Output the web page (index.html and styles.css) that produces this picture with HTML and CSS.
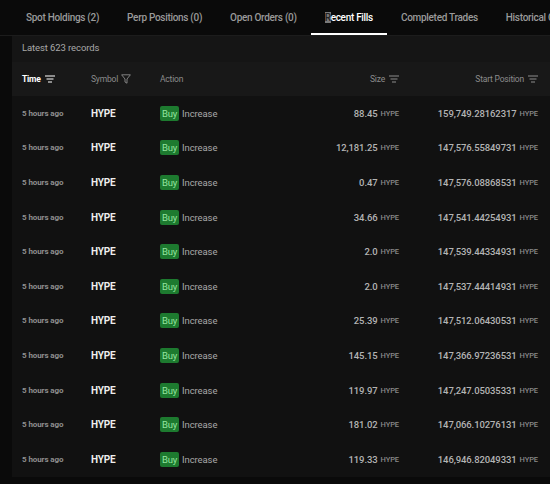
FILE: index.html
```html
<!DOCTYPE html>
<html lang="en">
<head>
    <meta charset="UTF-8">
    <title>Recent Fills</title>
    <link rel="stylesheet" href="styles.css">
</head>
<body>
    <nav class="tabs">
        <div class="tab">Spot Holdings (2)</div>
        <div class="tab">Perp Positions (0)</div>
        <div class="tab">Open Orders (0)</div>
        <div class="tab active"><span class="sel">R</span>ecent Fills</div>
        <div class="tab">Completed Trades</div>
        <div class="tab">Historical Orders</div>
    </nav>
    <div class="panel">
        <div class="count">Latest 623 records</div>
        <div class="row head">
            <div class="cell strong">Time <svg class="ico" viewBox="0 0 10 8"><path d="M0 1h10M1.5 4h7M3 7h4" stroke="currentColor" stroke-width="1.2"/></svg></div>
            <div class="cell">Symbol <svg class="ico funnel" viewBox="0 0 10 10"><path d="M0.6 0.8h8.8L6 5v4.2L4 8V5z" fill="none" stroke="currentColor" stroke-width="0.9"/></svg></div>
            <div class="cell">Action</div>
            <div class="cell num">Size <svg class="ico" viewBox="0 0 10 8"><path d="M0 1h10M1.5 4h7M3 7h4" stroke="currentColor" stroke-width="1"/></svg></div>
            <div class="cell num">Start Position <svg class="ico" viewBox="0 0 10 8"><path d="M0 1h10M1.5 4h7M3 7h4" stroke="currentColor" stroke-width="1"/></svg></div>
        </div>
        <div id="rows"></div>
    </div>

    <script>
        const fills = [
            ['88.45', '159,749.28162317'],
            ['12,181.25', '147,576.55849731'],
            ['0.47', '147,576.08868531'],
            ['34.66', '147,541.44254931'],
            ['2.0', '147,539.44334931'],
            ['2.0', '147,537.44414931'],
            ['25.39', '147,512.06430531'],
            ['145.15', '147,366.97236531'],
            ['119.97', '147,247.05035331'],
            ['181.02', '147,066.10276131'],
            ['119.33', '146,946.82049331']
        ];
        const rows = document.getElementById('rows');
        fills.forEach(f => {
            const row = document.createElement('div');
            row.className = 'row';
            row.innerHTML =
                '<div class="cell time">5 hours ago</div>' +
                '<div class="cell sym">HYPE</div>' +
                '<div class="cell"><span class="buy">Buy</span><span class="dir">Increase</span></div>' +
                '<div class="cell num val">' + f[0] + ' <span class="unit">HYPE</span></div>' +
                '<div class="cell num val">' + f[1] + ' <span class="unit">HYPE</span></div>';
            rows.appendChild(row);
        });
    </script>
</body>
</html>
```

FILE: styles.css
```css
body {
    margin: 0;
    background-color: #0a0a0a;
    font-family: Roboto, "Liberation Sans", sans-serif;
    color: #9a9a9a;
    overflow: hidden;
}
.tabs {
    display: flex;
    height: 35px;
    padding-left: 12px;
    border-bottom: 1px solid #1c1c1c;
    white-space: nowrap;
    overflow: hidden;
}
.tab {
    padding: 0 14px;
    line-height: 35px;
    font-size: 10px;
    letter-spacing: -0.3px;
    font-weight: 500;
    color: #9a9a9a;
    position: relative;
    flex-shrink: 0;
}
.tab.active {
    color: #fff;
}
.tab.active::after {
    content: "";
    position: absolute;
    left: 0;
    right: 0;
    bottom: 0;
    height: 2px;
    background-color: #fff;
}
.sel {
    background-color: #7a7a7a;
    color: #222;
}
.panel {
    margin-left: 12px;
    background-color: #111;
}
.count {
    height: 26px;
    line-height: 24px;
    padding-left: 10px;
    font-size: 9.5px;
    letter-spacing: -0.1px;
    color: #a8a8a8;
    background-color: #151515;
}
.row {
    display: grid;
    grid-template-columns: 69px 69px 100px 139px 139px;
    padding-left: 10px;
    height: 34.6px;
    align-items: center;
    white-space: nowrap;
}
.row.head {
    height: 34px;
    background-color: #181818;
    font-size: 8.5px;
    letter-spacing: -0.2px;
    color: #8c8c8c;
}
.cell {
    display: flex;
    align-items: center;
}
.cell.num {
    justify-content: flex-end;
}
.strong {
    color: #fff;
    font-weight: 700;
}
.ico {
    width: 10px;
    height: 8px;
    margin-left: 4px;
}
.ico.funnel {
    width: 10px;
    height: 10px;
    margin-left: 3px;
}
.time {
    font-size: 8px;
    font-weight: 700;
    letter-spacing: -0.1px;
    color: #8f8f8f;
}
.sym {
    font-size: 10px;
    font-weight: 700;
    letter-spacing: -0.2px;
    color: #eee;
}
.buy {
    background-color: #1d7a2f;
    color: #93e49f;
    font-size: 9.5px;
    letter-spacing: -0.2px;
    padding: 2px 2px;
    border-radius: 2px;
    margin-right: 3px;
}
.dir {
    font-size: 9.5px;
    letter-spacing: -0.1px;
    color: #a8a8a8;
}
.val {
    font-size: 9.5px;
    font-weight: 500;
    letter-spacing: -0.1px;
    color: #b4b4b4;
}
.unit {
    font-size: 7.5px;
    color: #8a8a8a;
    margin-left: 3px;
}
```
